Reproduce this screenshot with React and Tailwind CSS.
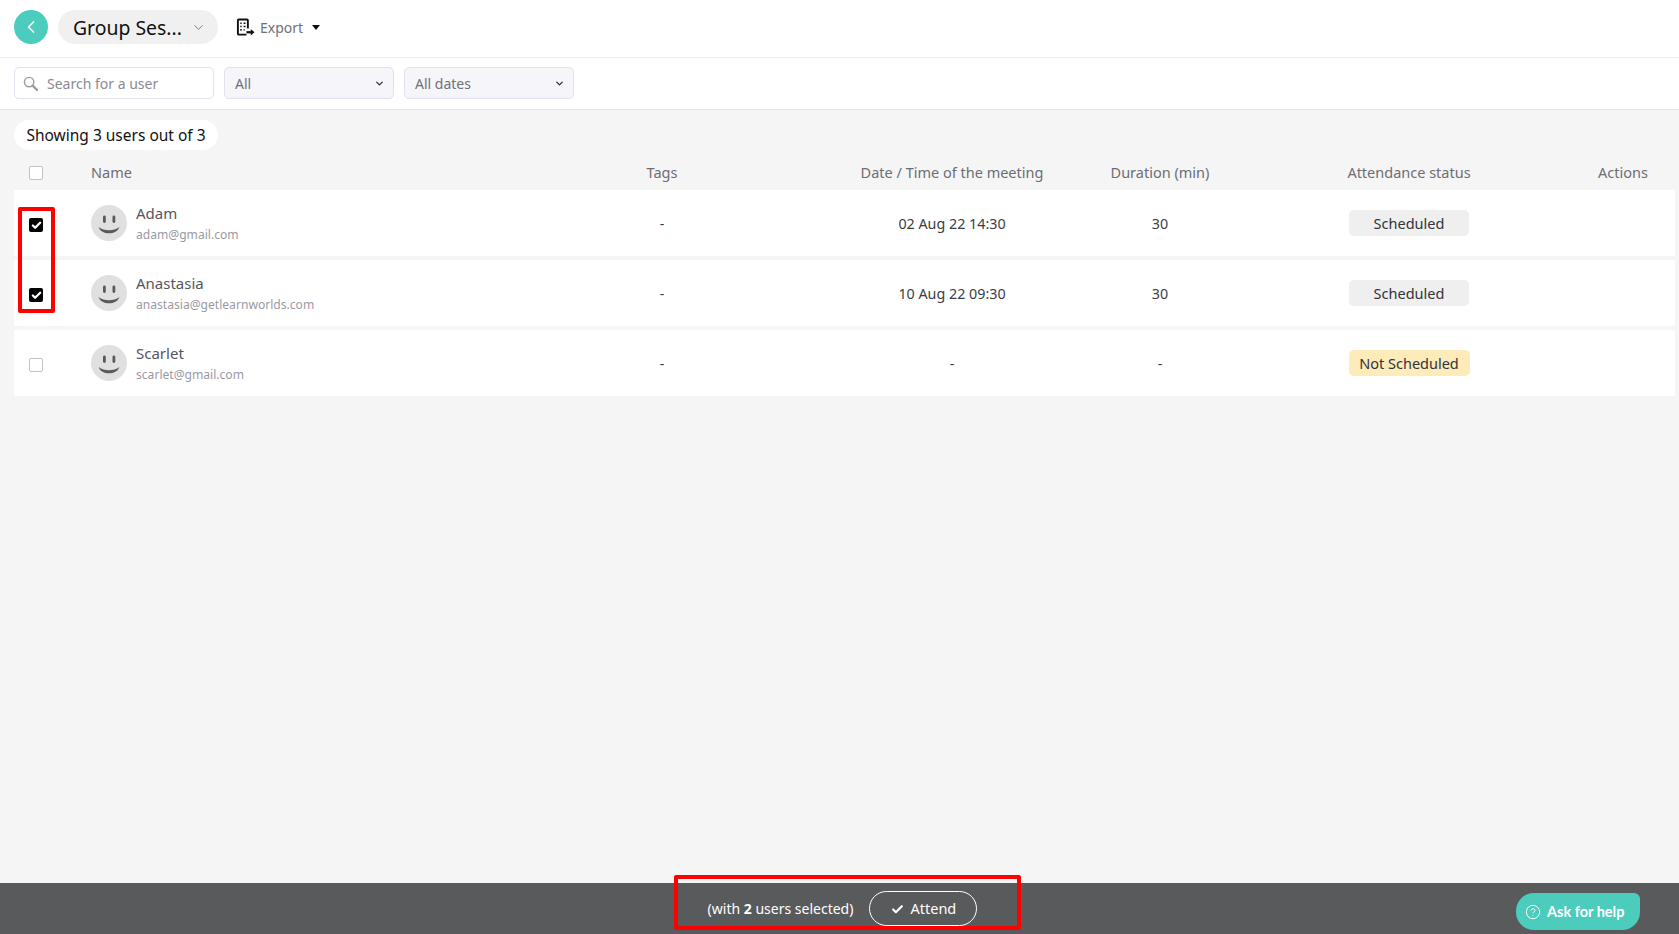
import { ChevronDown, ChevronLeft, Check, CircleHelp } from 'lucide-react'

const USERS = [
  { name: 'Adam', email: 'adam@gmail.com', date: '02 Aug 22 14:30', duration: '30', status: 'Scheduled', checked: true },
  { name: 'Anastasia', email: 'anastasia@getlearnworlds.com', date: '10 Aug 22 09:30', duration: '30', status: 'Scheduled', checked: true },
  { name: 'Scarlet', email: 'scarlet@gmail.com', date: '-', duration: '-', status: 'Not Scheduled', checked: false },
]

const COLS = 'grid grid-cols-[77px_411px_320px_260px_156px_342px_86px] pr-[9px] items-center'

function Smiley() {
  return (
    <svg viewBox="0 0 36 36" className="w-9 h-9 shrink-0">
      <circle cx="18" cy="18" r="18" fill="#e0e0e0" />
      <rect x="12" y="10.500" width="2.800" height="7.500" rx="1.400" fill="#5a5a5a" />
      <rect x="21.500" y="10.500" width="2.800" height="7.500" rx="1.400" fill="#5a5a5a" />
      <path d="M7.500 22c3 2.300 6.700 3.300 10.500 3.300s7.500-1 10.500-3.300c-1.800 4.600-5.800 6.300-10.500 6.300s-8.700-1.700-10.500-6.300z" fill="#5a5a5a" />
    </svg>
  )
}

function Checkbox({ checked }) {
  if (checked) {
    return (
      <div className="w-[14px] h-[14px] rounded-[2px] bg-black flex items-center justify-center">
        <Check className="w-[11px] h-[11px] text-white" strokeWidth={5} />
      </div>
    )
  }
  return <div className="w-[14px] h-[14px] rounded-[2px] bg-white border border-[#c4c4c4]" />
}

function ExportIcon() {
  return (
    <svg viewBox="0 0 20 20" className="w-[19px] h-[19px] text-[#111]" fill="none" stroke="currentColor">
      <path d="M12.500 11V2.500a1 1 0 0 0-1-1H3a1 1 0 0 0-1 1v14a1 1 0 0 0 1 1h8" strokeWidth="2" />
      <path d="M4.500 5.500h1.500M8 5.500h2M4.500 9h1.500M8 9h2M4.500 12.500h1.500M8 12.500h1" strokeWidth="1.700" />
      <path d="M11 15h5" strokeWidth="2.400" />
      <path d="M15.500 11.500l4 3.500-4 3.500z" fill="currentColor" stroke="none" />
    </svg>
  )
}

function SearchIcon() {
  return (
    <svg viewBox="0 0 16 16" className="w-[15px] h-[15px]" fill="none" stroke="#9b9b9b">
      <circle cx="6.500" cy="6.500" r="5" strokeWidth="1.500" />
      <path d="M10.300 10.300L15 15" strokeWidth="2.400" strokeLinecap="round" />
    </svg>
  )
}

function Select({ label }) {
  return (
    <div className="w-[170px] h-[32px] flex items-center justify-between pl-[10px] pr-[8px] bg-[#f6f6fa] border border-[#e1e1f0] rounded-[5px] text-[14px] text-[#70707a]">
      <span>{label}</span>
      <ChevronDown className="w-[11px] h-[11px] text-[#333]" strokeWidth={3} />
    </div>
  )
}

function UserRow({ user }) {
  const notScheduled = user.status === 'Not Scheduled'
  return (
    <div className={`${COLS} h-[66px] bg-white text-[14.300px] text-[#3c3c44]`}>
      <div className="pl-[15px] pt-[4px]">
        <Checkbox checked={user.checked} />
      </div>
      <div className="flex items-center gap-[9px]">
        <Smiley />
        <div className="leading-[20px] pt-[2px]">
          <div className="text-[15px] text-[#55555e]">{user.name}</div>
          <div className="mt-[2px] text-[12.100px] text-[#9a9aa2]">{user.email}</div>
        </div>
      </div>
      <div className="text-center pt-[2px]">-</div>
      <div className="text-center pt-[2px]">{user.date}</div>
      <div className="text-center pt-[2px]">{user.duration}</div>
      <div className="flex justify-center">
        <div className={`h-[26px] pt-[2px] flex items-center justify-center rounded-[5px] text-[14.500px] text-[#33333b] ${notScheduled ? 'bg-[#fdebb9] w-[121px]' : 'bg-[#efefef] w-[120px]'}`}>
          {user.status}
        </div>
      </div>
      <div />
    </div>
  )
}

export default function App() {
  return (
    <div className="relative h-[934px] flex flex-col overflow-hidden bg-[#f5f5f5] font-['Noto_Sans','Open_Sans',sans-serif]">
      {/* top bar */}
      <div className="h-[58px] shrink-0 bg-white border-b border-[#eeeeee] flex items-start pt-[10px] pl-[14px]">
        <div className="w-[34px] h-[34px] rounded-full bg-[#4bccbd] flex items-center justify-center">
          <ChevronLeft className="w-[20px] h-[20px] text-white" strokeWidth={2} />
        </div>
        <div className="ml-[10px] w-[160px] h-[34px] rounded-full bg-[#f0f0f0] flex items-center pl-[15px]">
          <span className="text-[19.400px] text-[#111] pt-[2px]">Group Ses...</span>
          <ChevronDown className="ml-[9px] w-[15px] h-[15px] text-[#777]" strokeWidth={1.500} />
        </div>
        <div className="ml-[18px] h-[34px] flex items-center">
          <ExportIcon />
          <span className="ml-[5px] text-[14px] text-[#70707a]">Export</span>
          <svg viewBox="0 0 8 5" className="ml-[9px] w-[8px] h-[5px]">
            <path d="M0 0h8L4 5z" fill="#111" />
          </svg>
        </div>
      </div>

      {/* filters */}
      <div className="h-[52px] shrink-0 bg-white border-b border-[#e4e4e8] flex items-start gap-[10px] pt-[9px] pl-[14px]">
        <div className="w-[200px] h-[32px] flex items-center pl-[8px] bg-white border border-[#e1e1f0] rounded-[5px]">
          <SearchIcon />
          <span className="ml-[9px] text-[14px] text-[#8a8a92]">Search for a user</span>
        </div>
        <Select label="All" />
        <Select label="All dates" />
      </div>

      {/* table */}
      <div className="flex-1 pl-[14px] pr-[4px] pt-[10px]">
        <div className="w-[204px] h-[30px] pt-[2px] rounded-full bg-white flex items-center justify-center text-[15.500px] text-[#111]">
          Showing 3 users out of 3
        </div>
        <div className={`${COLS} h-[40px] pt-[6px] text-[14.500px] text-[#6d6d76]`}>
          <div className="pl-[15px]">
            <Checkbox checked={false} />
          </div>
          <div>Name</div>
          <div className="text-center">Tags</div>
          <div className="text-center">Date / Time of the meeting</div>
          <div className="text-center">Duration (min)</div>
          <div className="text-center">Attendance status</div>
          <div className="text-center">Actions</div>
        </div>
        <div className="flex flex-col gap-[4px]">
          {USERS.map(user => (
            <UserRow key={user.email} user={user} />
          ))}
        </div>
      </div>

      {/* bottom bar */}
      <div className="h-[51px] shrink-0 bg-[#595a5c] flex items-center justify-center pl-[6px] text-white">
        <span className="text-[14px]">(with <b>2</b> users selected)</span>
        <div className="ml-[16px] w-[108px] h-[35px] pt-[1px] rounded-full border border-white flex items-center justify-center gap-[7px] text-[14.500px]">
          <Check className="w-[13px] h-[13px]" strokeWidth={4} />
          Attend
        </div>
      </div>

      {/* help widget */}
      <div className="absolute left-[1516px] top-[893px] w-[124px] h-[37px] rounded-l-[18px] rounded-br-[18px] rounded-tr-[6px] bg-[#4bccbd] flex items-center pl-[9px] gap-[6px] text-white text-[14.500px] font-bold font-['Lato',sans-serif]">
        <CircleHelp className="w-[16px] h-[16px]" strokeWidth={1.500} />
        Ask for help
      </div>

      {/* annotation boxes */}
      <div className="absolute left-[18px] top-[207px] w-[37px] h-[106px] border-[4px] border-[#ff0000] rounded-[2px]" />
      <div className="absolute left-[674px] top-[875px] w-[347px] h-[55px] border-[4px] border-[#ff0000] rounded-[2px]" />
    </div>
  )
}
